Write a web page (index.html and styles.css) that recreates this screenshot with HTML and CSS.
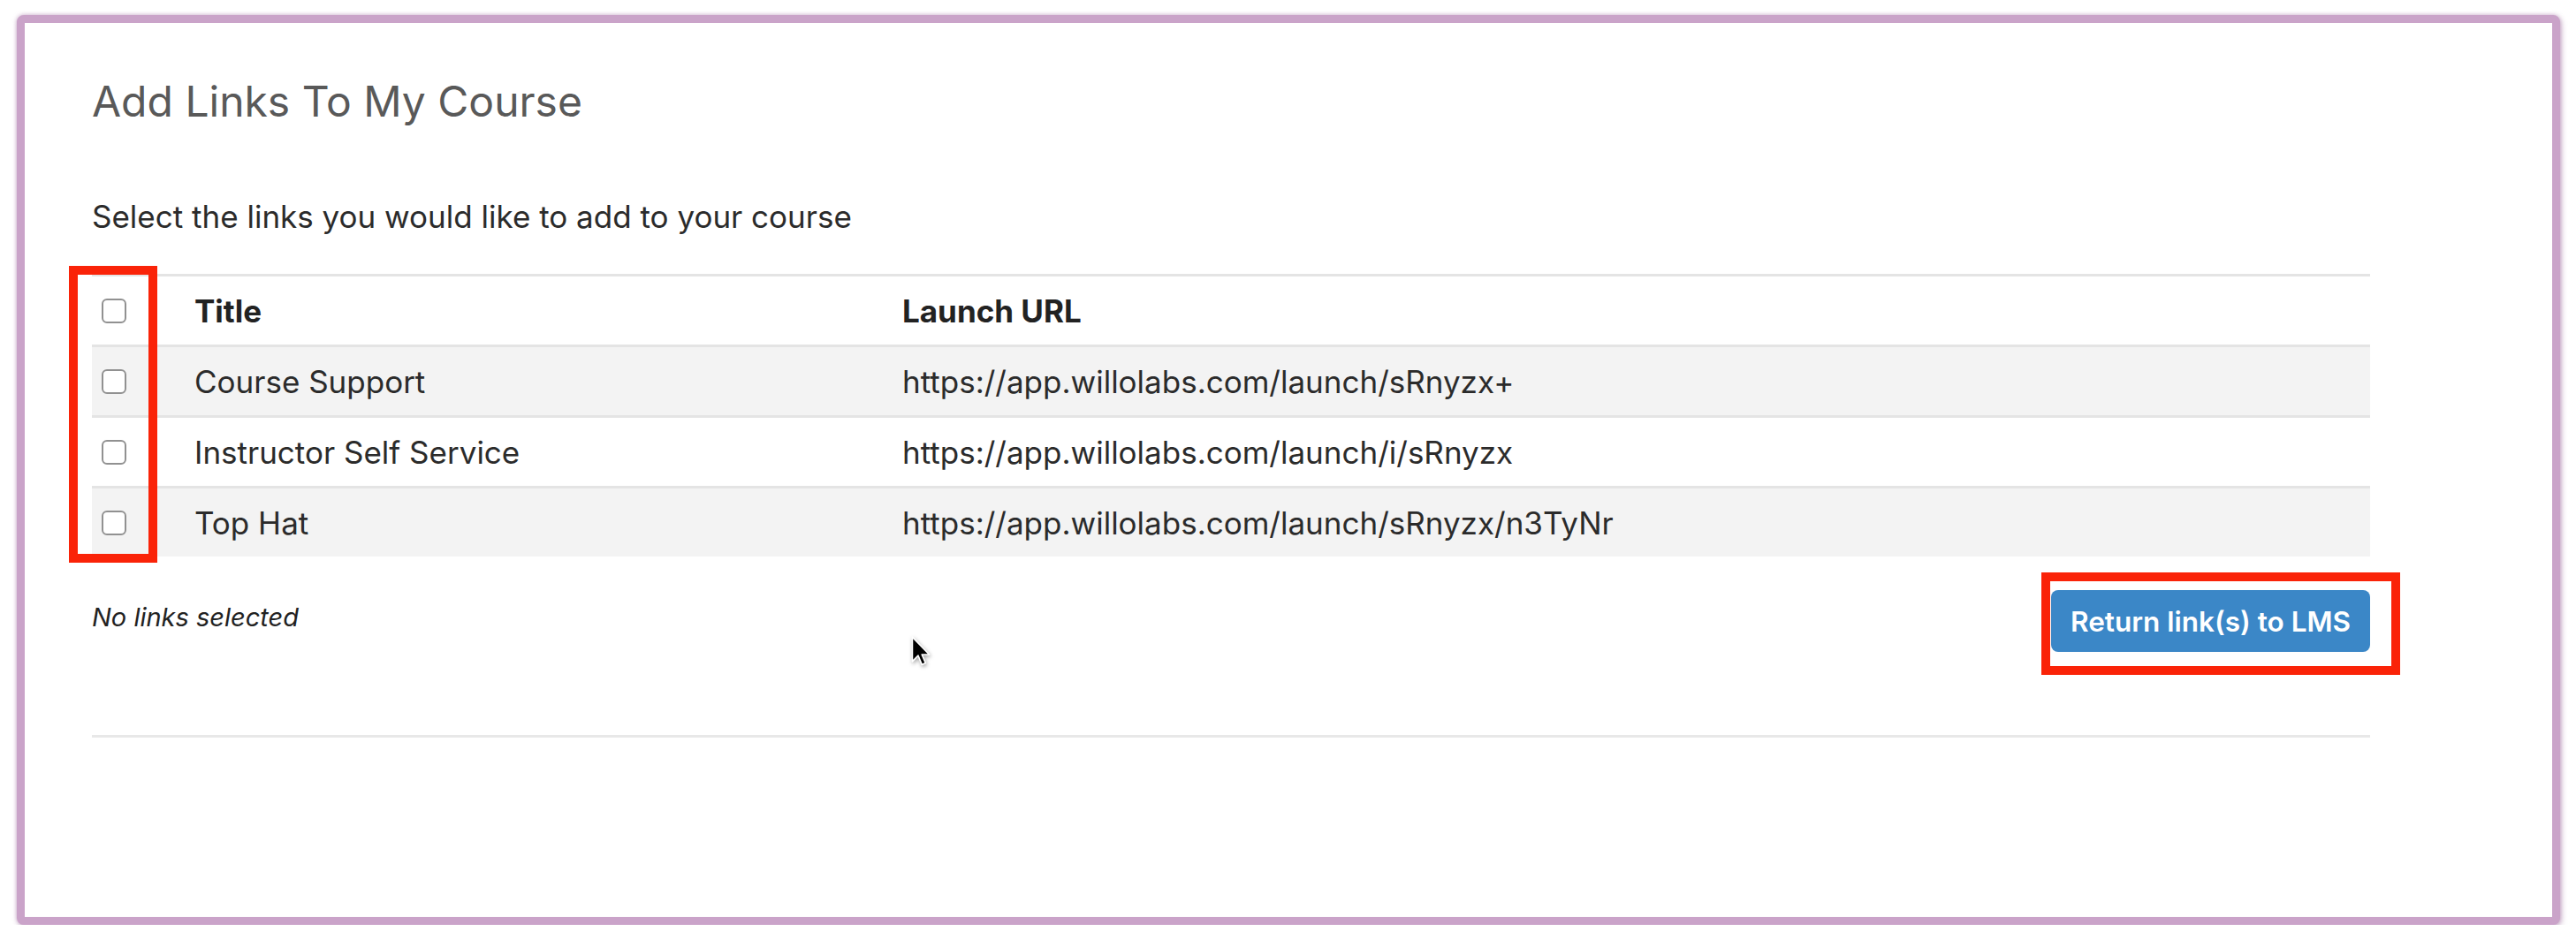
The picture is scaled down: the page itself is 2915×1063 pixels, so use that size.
FILE: index.html
```html
<!DOCTYPE html>
<html lang="en">
    <head>
        <meta charset="utf-8">
        <meta name="viewport" content="width=device-width, initial-scale=1">
        <link rel="stylesheet" href="styles.css">
        <title>Add Links To My Course</title>
    </head>
    <body>
        <div class="frame">
            <div class="content">
                <h1 class="page-title">Add Links To My Course</h1>
                <p class="lead">Select the links you would like to add to your course</p>
                <table class="links">
                    <thead>
                        <tr>
                            <th class="check"><input type="checkbox"></th>
                            <th class="title">Title</th>
                            <th>Launch URL</th>
                        </tr>
                    </thead>
                    <tbody>
                        <tr>
                            <td class="check"><input type="checkbox"></td>
                            <td class="title">Course Support</td>
                            <td>https://app.willolabs.com/launch/sRnyzx+</td>
                        </tr>
                        <tr>
                            <td class="check"><input type="checkbox"></td>
                            <td class="title">Instructor Self Service</td>
                            <td>https://app.willolabs.com/launch/i/sRnyzx</td>
                        </tr>
                        <tr>
                            <td class="check"><input type="checkbox"></td>
                            <td class="title">Top Hat</td>
                            <td>https://app.willolabs.com/launch/sRnyzx/n3TyNr</td>
                        </tr>
                    </tbody>
                </table>
                <div class="actions">
                    <em class="status">No links selected</em>
                    <button type="button" class="btn-primary">Return link(s) to LMS</button>
                </div>
                <hr class="rule">
            </div>

            <!-- annotation boxes and pointer drawn over the page -->
            <div class="mark mark-checks"></div>
            <div class="mark mark-button"></div>
            <svg class="cursor" viewBox="0 0 20 30" width="24" height="36">
                <path d="M2 1 L2 24 L7.5 18.5 L11 27 L14.5 25.5 L11 17.5 L18 17.5 Z" fill="#000" stroke="#fff" stroke-width="1.4" stroke-linejoin="round"/>
            </svg>
        </div>
    </body>
</html>
```

FILE: styles.css
```css
body {
    margin: 0;
    padding: 17px 0 0 19px;
    background-color: #fff;
    font-family: "Inter", "Liberation Sans", Arial, sans-serif;
    color: #2b2b2b;
}

.frame {
    position: relative;
    width: 2860px;
    height: 1012px;
    border: 9px solid #caa3c9;
    border-radius: 8px;
    box-shadow: 0 0 5px rgba(160, 110, 160, 0.55), 2px 3px 6px rgba(150, 100, 150, 0.35);
    background-color: #fff;
}

.content {
    width: 2578px;
    padding: 65px 0 0 76px;
}

.page-title {
    margin: 0;
    font-size: 48px;
    line-height: 1;
    font-weight: 400;
    color: #595959;
}

.lead {
    margin: 89px 0 0;
    font-size: 35px;
    line-height: 1;
    color: #2b2b2b;
}

table.links {
    margin-top: 47px;
    width: 100%;
    border-collapse: separate;
    border-spacing: 0;
    table-layout: fixed;
    font-size: 35px;
}

table.links th,
table.links td {
    height: 77px;
    padding: 0 16px;
    border-top: 3px solid #e4e4e4;
    text-align: left;
    vertical-align: middle;
    white-space: nowrap;
}

table.links th {
    font-weight: 700;
    color: #222;
}

table.links th.check,
table.links td.check {
    width: 100px;
    padding: 0 0 0 11px;
    box-sizing: border-box;
}

table.links th.title,
table.links td.title {
    width: 769px;
}

table.links tbody tr:nth-child(odd) td {
    background-color: #f3f3f3;
}

input[type="checkbox"] {
    -webkit-appearance: none;
    appearance: none;
    display: block;
    margin: 0;
    width: 28px;
    height: 28px;
    border: 2px solid #919191;
    border-radius: 6px;
    background-color: #fff;
}

.actions {
    display: flex;
    justify-content: space-between;
    align-items: center;
    margin-top: 38px;
}

.status {
    font-size: 29px;
    color: #222;
    padding-bottom: 10px;
}

.btn-primary {
    height: 70px;
    padding: 0 22px;
    border: none;
    border-radius: 8px;
    background-color: #3b87c7;
    color: #fff;
    font-family: "Inter", "Liberation Sans", Arial, sans-serif;
    font-size: 31.5px;
    font-weight: 600;
}

.rule {
    margin: 94px 0 0;
    height: 0;
    border: none;
    border-top: 3px solid #e8e8e8;
}

.mark {
    position: absolute;
    border: 10px solid #fa2308;
    box-sizing: border-box;
}

.mark-checks {
    left: 50px;
    top: 275px;
    width: 100px;
    height: 336px;
}

.mark-button {
    left: 2282px;
    top: 622px;
    width: 406px;
    height: 116px;
}

.cursor {
    position: absolute;
    left: 1002px;
    top: 694px;
    filter: drop-shadow(1px 2px 2px rgba(0, 0, 0, 0.35));
}
```
